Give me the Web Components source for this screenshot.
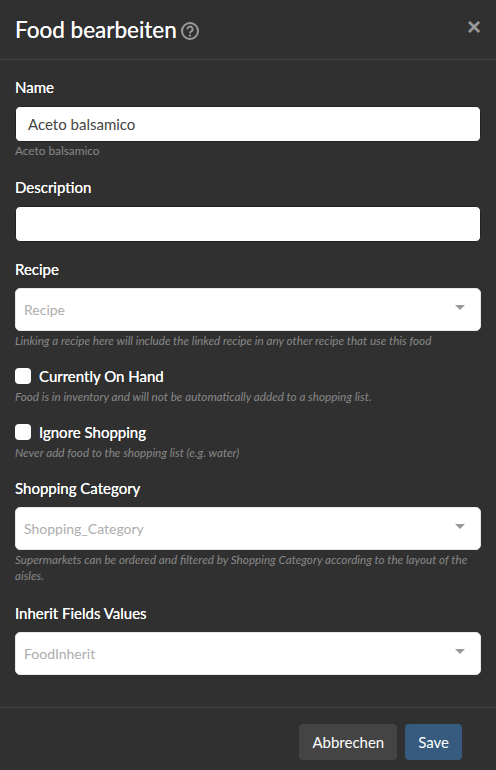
<!DOCTYPE html>
<html>
<head>
<meta charset="utf-8">
<style>
  html, body { margin: 0; padding: 0; background: #303030; }
  body { font-family: Lato, "Liberation Sans", sans-serif; color: #fff; width: 496px; height: 770px; overflow: hidden; }
</style>
</head>
<body>
<food-modal>
  <form-field label="Name" style="--after:19px">
    <text-box value="Aceto balsamico"></text-box>
    <span slot="help" class="plain">Aceto balsamico</span>
  </form-field>
  <form-field label="Description" style="--after:18px">
    <text-box></text-box>
  </form-field>
  <form-field label="Recipe" style="--after:17px">
    <select-box placeholder="Recipe"></select-box>
    <help-text slot="help">Linking a recipe here will include the linked recipe in any other recipe that use this food</help-text>
  </form-field>
  <check-field label="Currently On Hand" help="Food is in inventory and will not be automatically added to a shopping list."></check-field>
  <check-field label="Ignore Shopping" help="Never add food to the shopping list (e.g. water)" style="--after:19px"></check-field>
  <form-field label="Shopping Category" style="--after:21px">
    <select-box placeholder="Shopping_Category"></select-box>
    <help-text slot="help">Supermarkets can be ordered and filtered by Shopping Category according to the layout of the aisles.</help-text>
  </form-field>
  <form-field label="Inherit Fields Values" style="--after:0px">
    <select-box placeholder="FoodInherit"></select-box>
  </form-field>
</food-modal>

<script>
class FoodModal extends HTMLElement {
  constructor() {
    super();
    this.attachShadow({mode: "open"}).innerHTML = `
      <style>
        :host { display: block; width: 496px; height: 770px; background: #303030; }
        header { display: flex; align-items: flex-start; justify-content: space-between; height: 60px; box-sizing: border-box; padding: 16px 15px 0; border-bottom: 1px solid #444; }
        h5 { margin: 0; display: flex; align-items: center; gap: 4px; font-size: 22.5px; font-weight: 400; line-height: 28px; color: #fff; text-shadow: 0 0 .4px #fff; }
        .close { font: 700 24px/22px "Liberation Sans", sans-serif; color: #999; margin-top: 0; }
        svg { display: block; margin-top: 1px; }
        main { height: 648px; box-sizing: border-box; padding: 18px 15px 0; border-bottom: 1px solid #444; }
        footer { display: flex; justify-content: flex-end; gap: 8px; padding: 16px 34px 0 0; }
        button { font: 400 15px Lato, "Liberation Sans", sans-serif; color: #fff; border: 0; border-radius: 4px; height: 36px; padding: 0 13px; }
        .cancel { background: #444; }
        .save { background: #375a7f; }
      </style>
      <header>
        <h5>Food bearbeiten
          <svg width="18" height="18" viewBox="0 0 18 18" fill="none" stroke="#999" stroke-width="2">
            <circle cx="9" cy="9" r="8"/>
            <path d="M6.4 7.2a2.6 2.6 0 1 1 3.9 2.2c-.9.5-1.3 1-1.3 1.9" stroke-width="1.9"/>
            <path d="M9 12.6v1.8" stroke-width="2"/>
          </svg>
        </h5>
        <span class="close">×</span>
      </header>
      <main><slot></slot></main>
      <footer>
        <button class="cancel">Abbrechen</button>
        <button class="save">Save</button>
      </footer>`;
  }
}

class FormField extends HTMLElement {
  constructor() {
    super();
    this.attachShadow({mode: "open"}).innerHTML = `
      <style>
        :host { display: block; margin-bottom: var(--after, 20px); }
        label { display: block; font-size: 15px; font-weight: 400; line-height: 18px; margin-bottom: 10px; color: #fff; text-shadow: 0 0 .4px #fff; }
        ::slotted(.plain) { display: block; font-size: 11.8px; line-height: 16px; color: #888; margin-top: 1px; }
      </style>
      <label></label>
      <slot></slot>
      <slot name="help"></slot>`;
    this.shadowRoot.querySelector("label").textContent = this.getAttribute("label");
  }
}

class TextBox extends HTMLElement {
  constructor() {
    super();
    this.attachShadow({mode: "open"}).innerHTML = `
      <style>
        :host { display: block; }
        div { height: 36px; box-sizing: border-box; background: #fff; border: 1px solid #222; border-radius: 5px; padding: 0 12px; font-size: 15px; line-height: 34px; color: #444; }
      </style>
      <div></div>`;
    this.shadowRoot.querySelector("div").textContent = this.getAttribute("value") || "";
  }
}

class SelectBox extends HTMLElement {
  constructor() {
    super();
    this.attachShadow({mode: "open"}).innerHTML = `
      <style>
        :host { display: block; }
        div { position: relative; height: 43px; box-sizing: border-box; background: #fff; border: 1px solid #e8e8e8; border-radius: 5px; padding: 0 8px; font-size: 14px; line-height: 41px; color: #adadad; }
        i { position: absolute; right: 15px; top: 16px; width: 0; height: 0; border: 5px solid transparent; border-top-color: #999; border-bottom: 0; }
      </style>
      <div><span></span><i></i></div>`;
    this.shadowRoot.querySelector("span").textContent = this.getAttribute("placeholder");
  }
}

class HelpText extends HTMLElement {
  constructor() {
    super();
    this.attachShadow({mode: "open"}).innerHTML = `
      <style>
        :host { display: block; font-size: 11.7px; line-height: 16px; font-style: italic; color: #888; margin-top: 1px; }
      </style>
      <slot></slot>`;
  }
}

class CheckField extends HTMLElement {
  constructor() {
    super();
    this.attachShadow({mode: "open"}).innerHTML = `
      <style>
        :host { display: block; margin-bottom: var(--after, 17px); }
        .row { display: flex; align-items: center; gap: 8px; height: 22px; }
        .box { width: 16px; height: 16px; background: #fff; border-radius: 4px; }
        .text { font-size: 15px; color: #fff; text-shadow: 0 0 .4px #fff; }
        .help { font-size: 11.7px; line-height: 16px; font-style: italic; color: #888; margin-top: 1px; }
      </style>
      <div class="row"><span class="box"></span><span class="text"></span></div>
      <div class="help"></div>`;
    this.shadowRoot.querySelector(".text").textContent = this.getAttribute("label");
    this.shadowRoot.querySelector(".help").textContent = this.getAttribute("help");
  }
}

customElements.define("food-modal", FoodModal);
customElements.define("form-field", FormField);
customElements.define("text-box", TextBox);
customElements.define("select-box", SelectBox);
customElements.define("help-text", HelpText);
customElements.define("check-field", CheckField);
</script>
</body>
</html>
